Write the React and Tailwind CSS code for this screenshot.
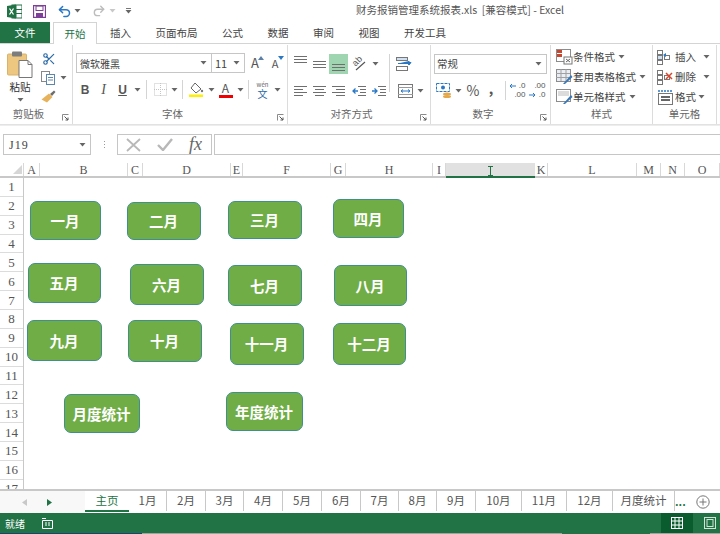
import React from "react";
import { Undo2, Redo2, Scissors } from "lucide-react";

const FONT = { fontFamily: '"Noto Sans CJK SC", "Noto Sans", sans-serif' };
const HEAD = { fontFamily: '"Liberation Serif", "Noto Sans CJK SC", serif' };

const Caret = ({ c = "#666" }) => (
  <svg width="7" height="4" viewBox="0 0 7 4" className="shrink-0"><path d="M0.5 0 H6.5 L3.5 3.5Z" fill={c} /></svg>
);
const Slot = ({ w, children, className = "" }) => (
  <div className={`flex h-full shrink-0 items-center justify-center ${className}`} style={{ width: w }}>{children}</div>
);
const Sep = () => <div className="mx-[3px] h-[19px] w-px shrink-0 bg-[#d4d4d4]" />;
const Launcher = () => (
  <svg width="7" height="7" viewBox="0 0 7 7" className="absolute bottom-[3px] right-[3px]">
    <path d="M0.5 6.5V0.5H6.5" fill="none" stroke="#8a8a8a" />
    <path d="M2.5 2.5L6 6M6 3.5V6H3.5" fill="none" stroke="#555" />
  </svg>
);
const Group = ({ w, label, launcher, children }) => (
  <div className="relative flex h-full shrink-0 flex-col border-r border-[#dcdcdc]" style={{ width: w }}>
    <div className="min-h-0 flex-1">{children}</div>
    <div className={`h-[18px] text-center text-[10.5px] leading-[15px] text-[#666] ${launcher ? "pr-[15px]" : ""}`}>{label}</div>
    {launcher && <Launcher />}
  </div>
);

const Lines = ({ rows }) => (
  <svg width="13" height="12" viewBox="0 0 13 12">
    {rows.map(([x, y, w], i) => (
      <rect key={i} x={x} y={y} width={w} height="1" fill="#6f6f6f" />
    ))}
  </svg>
);
const L = [[0, 1, 13], [0, 4, 9], [0, 7, 13], [0, 10, 9]];
const C = [[0, 1, 13], [2, 4, 9], [0, 7, 13], [2, 10, 9]];
const R = [[0, 1, 13], [4, 4, 9], [0, 7, 13], [4, 10, 9]];
const Indent = ({ dir }) => (
  <svg width="14" height="12" viewBox="0 0 14 12">
    <path d="M6 1.5H14M8 4.5H14M8 7.5H14M6 10.5H14" stroke="#6f6f6f" />
    {dir === "l" ? <path d="M6 6H1M3.5 3.5L1 6L3.5 8.5" fill="none" stroke="#2a78c5" strokeWidth="1.3" /> : <path d="M0 6H5M2.5 3.5L5 6L2.5 8.5" fill="none" stroke="#2a78c5" strokeWidth="1.3" />}
  </svg>
);
const BigA = ({ up }) => (
  <div className="relative flex h-full w-[20px] items-center justify-center text-[#555]" style={{ fontSize: up ? 13 : 11 }}>
    A
    <svg width="6" height="4" viewBox="0 0 6 4" className="absolute right-[1px] top-[3px]">
      <path d={up ? "M0 4L3 0L6 4Z" : "M0 0L3 4L6 0Z"} fill={up ? "#5b7fa8" : "#2a78c5"} />
    </svg>
  </div>
);

const StyleIcon = ({ kind }) => (
  <svg width="17" height="16" viewBox="0 0 17 16" className="shrink-0">
    {kind === 0 && (<>
      <rect x="0.5" y="0.5" width="14" height="12" fill="#fff" stroke="#8c8c8c" />
      <rect x="1" y="1" width="5" height="3" fill="#c8452e" /><rect x="1" y="5" width="5" height="3" fill="#c8452e" />
      <rect x="8" y="8" width="8" height="7" fill="#fff" stroke="#777" />
      <path d="M10 10L14 13M14 10L10 13" stroke="#666" />
    </>)}
    {kind === 1 && (<>
      <rect x="0.5" y="0.5" width="14" height="12" fill="#e8eef4" stroke="#8c8c8c" />
      <path d="M0 4.5H14M0 8.5H14M5 0V12M10 0V12" stroke="#a0a0a0" />
      <path d="M7 15L15 6L16.5 8L9 15Z" fill="#3a78b5" />
    </>)}
    {kind === 2 && (<>
      <rect x="0.5" y="0.5" width="14" height="12" fill="#fff" stroke="#8c8c8c" />
      <rect x="2" y="2" width="11" height="5" fill="#dcdcdc" />
      <path d="M7 15L15 6L16.5 8L9 15Z" fill="#3a78b5" />
    </>)}
  </svg>
);
const CellIcon = ({ kind }) => (
  <svg width="17" height="15" viewBox="0 0 17 15" className="shrink-0">
    {kind !== 2 ? (<>
      <rect x="0.5" y="0.5" width="5" height="4" fill="#fff" stroke="#777" />
      <rect x="0.5" y="5.5" width="5" height="4" fill={kind === 0 ? "#cfe0f2" : "#fff"} stroke="#777" />
      <rect x="0.5" y="10.5" width="5" height="4" fill="#fff" stroke="#777" />
      <rect x="7.5" y="5.5" width="5" height="4" fill="#fff" stroke="#777" />
      {kind === 0 ? <path d="M9 3L6 5L9 7Z" fill="#2a78c5" /> : <path d="M9 3L15 9M15 3L9 9" stroke="#d9442c" strokeWidth="1.5" />}
    </>) : (<>
      <rect x="1.5" y="3.5" width="14" height="11" fill="#fff" stroke="#777" />
      <path d="M1 1H16" stroke="#2a78c5" strokeDasharray="2 1" strokeWidth="1.5" />
      <path d="M4 7H13M4 10H13" stroke="#666" strokeWidth="2" />
    </>)}
  </svg>
);

const Clipboard = () => (
  <Group w={73} label="剪贴板" launcher>
    <div className="flex h-full">
      <div className="flex w-[37px] shrink-0 flex-col items-center pl-[3px] pt-[6px]">
        <svg width="26" height="27" viewBox="0 0 26 27">
          <rect x="0.5" y="3" width="19" height="21" rx="1" fill="#edc77f" stroke="#d9b26b" />
          <rect x="5" y="0.5" width="10" height="5" rx="1" fill="#7d7d7d" />
          <path d="M12 9.5H21L25 13.5V26.5H12Z" fill="#fff" stroke="#777" />
          <path d="M21 9.5V13.5H25" fill="none" stroke="#777" />
        </svg>
        <div className="mt-[1px] text-[10.5px] leading-[15px] text-[#333]">粘贴</div>
        <div className="mt-[4px]"><Caret /></div>
      </div>
      <div className="flex flex-col items-start pl-[4px] pt-[4px]">
        <div className="flex h-[20px] items-center pl-[1px]"><Scissors size={14} color="#2a6aa5" /></div>
        <div className="flex h-[20px] items-center gap-[5px]">
          <svg width="14" height="14" viewBox="0 0 14 14">
            <rect x="0.5" y="0.5" width="8" height="10" fill="#fff" stroke="#888" />
            <rect x="5.5" y="3.5" width="8" height="10" fill="#fff" stroke="#5c86ad" />
            <path d="M7 6.5H12M7 9H12" stroke="#5c86ad" />
          </svg>
          <Caret />
        </div>
        <div className="flex h-[20px] items-center">
          <svg width="15" height="13" viewBox="0 0 15 13">
            <path d="M9 4L13 0.5L14.5 2L11 6Z" fill="#6d6d6d" />
            <path d="M8 3.5L11.5 7L6 12.5L0.5 9.5Z" fill="#e6b35c" />
          </svg>
        </div>
      </div>
    </div>
  </Group>
);

const Combo = ({ w, text, pad = "pl-[3px]", size = "text-[10.5px]" }) => (
  <div className={`flex h-[20px] shrink-0 items-center justify-between border border-[#c6c6c6] bg-white pr-[4px] text-[#444] ${size} ${pad}`} style={{ width: w }}>
    <span>{text}</span><Caret />
  </div>
);

const FontGroup = () => (
  <Group w={215} label="字体" launcher>
    <div className="flex h-[28px] items-end pl-[3px]">
      <Combo w={136} text="微软雅黑" size="text-[10px]" />
      <Combo w={34} text="11" pad="pl-[3px] -ml-px" size="text-[11px]" />
      <div className="flex h-[20px]"><BigA up /><BigA /></div>
    </div>
    <div className="mt-[7px] flex h-[19px] items-center pl-[3px] text-[12px] text-[#555]">
      <Slot w={18}><span className="font-bold" style={{ fontFamily: '"Liberation Sans", sans-serif' }}>B</span></Slot>
      <Slot w={19}><span className="italic" style={{ fontFamily: '"Liberation Serif", serif', fontSize: 14 }}>I</span></Slot>
      <Slot w={19}><span className="font-bold underline" style={{ fontFamily: '"Liberation Sans", sans-serif' }}>U</span></Slot>
      <Slot w={11}><Caret /></Slot>
      <Sep />
      <Slot w={20}>
        <svg width="13" height="13" viewBox="0 0 13 13"><rect x="0.5" y="0.5" width="12" height="12" fill="none" stroke="#c4c4c4" strokeDasharray="1 1" /><path d="M6.5 0V13M0 6.5H13" stroke="#c4c4c4" strokeDasharray="1 1" /></svg>
      </Slot>
      <Slot w={9}><Caret /></Slot>
      <Sep />
      <Slot w={20}>
        <svg width="15" height="15" viewBox="0 0 15 15"><path d="M6 1L12 7L7 11L2 6Z" fill="#fff" stroke="#666" /><circle cx="13" cy="9" r="1.2" fill="#777" /><rect x="0" y="12.5" width="14" height="2.5" fill="#ffef00" /></svg>
      </Slot>
      <Slot w={10}><Caret /></Slot>
      <Slot w={19}>
        <div className="flex flex-col items-center leading-none">
          <span className="text-[12px] leading-[12px] text-[#555]">A</span>
          <div className="mt-[1px] h-[3px] w-[14px] bg-[#ee0000]" />
        </div>
      </Slot>
      <Slot w={10}><Caret /></Slot>
      <Sep />
      <Slot w={21}>
        <div className="flex flex-col items-center leading-none">
          <span className="block text-[6px] leading-[8px] text-[#666]">wén</span>
          <span className="block text-[10px] leading-[10px] text-[#2a6aa5]">文</span>
        </div>
      </Slot>
      <Slot w={9}><Caret /></Slot>
    </div>
  </Group>
);

const AlignGroup = () => (
  <Group w={143} label="对齐方式" launcher>
    <div className="flex h-[29px] items-end pl-[3px]">
      <Slot w={19} className="!h-[20px] pb-[6px]"><Lines rows={[[0, 1, 13], [0, 4, 13], [0, 7, 13]]} /></Slot>
      <Slot w={19} className="!h-[20px]"><Lines rows={[[0, 3, 13], [0, 6, 13], [0, 9, 13]]} /></Slot>
      <Slot w={19} className="!h-[20px] bg-[#9fd5b0] pt-[6px]"><Lines rows={[[0, 3, 13], [0, 6, 13], [0, 9, 13]]} /></Slot>
      <Slot w={23} className="!h-[20px]">
        <div className="relative h-[14px] w-[15px]">
          <span className="absolute left-0 top-[-2px] -rotate-45 text-[9px] leading-[12px] text-[#555]" style={{ fontFamily: '"Liberation Sans", sans-serif' }}>ab</span>
          <svg width="15" height="14" viewBox="0 0 15 14" className="absolute left-0 top-0"><path d="M4 13L13 5" stroke="#555" strokeWidth="1.2" /></svg>
        </div>
      </Slot>
      <Slot w={9} className="!h-[20px]"><Caret /></Slot>
      <div className="ml-[9px] mr-[3px] h-[38px] w-px translate-y-[9px] self-start bg-[#d4d4d4]" />
      <Slot w={22} className="!h-[20px]">
        <svg width="16" height="14" viewBox="0 0 16 14"><rect x="0.5" y="0.5" width="11" height="3" fill="#cfe0f2" stroke="#777" /><rect x="0.5" y="9.5" width="11" height="4" fill="#fff" stroke="#777" /><path d="M2 6.5H13V4M13 8L15 5.5H11Z" stroke="#2a78c5" fill="#2a78c5" /></svg>
      </Slot>
    </div>
    <div className="mt-[7px] flex h-[19px] items-center pl-[3px]">
      <Slot w={19}><Lines rows={L} /></Slot>
      <Slot w={19}><Lines rows={C} /></Slot>
      <Slot w={19}><Lines rows={R} /></Slot>
      <Slot w={21}><Indent dir="l" /></Slot>
      <Slot w={19}><Indent dir="r" /></Slot>
      <Slot w={6} />
      <Slot w={22}>
        <svg width="15" height="14" viewBox="0 0 15 14"><rect x="0.5" y="0.5" width="14" height="13" fill="#fff" stroke="#777" /><path d="M0 3.5H15M0 10.5H15" stroke="#999" /><path d="M3 7H12M3 7L5 5.5M3 7L5 8.5M12 7L10 5.5M12 7L10 8.5" stroke="#2a78c5" /></svg>
      </Slot>
      <Slot w={9}><Caret /></Slot>
    </div>
  </Group>
);

const NumberGroup = () => (
  <Group w={120} label="数字" launcher>
    <div className="flex h-[29px] items-end pl-[3px]">
      <Combo w={113} text="常规" pad="pl-[2px] border-[#ababab]" />
    </div>
    <div className="mt-[7px] flex h-[19px] items-center pl-[3px] text-[#555]">
      <Slot w={20}>
        <svg width="16" height="15" viewBox="0 0 16 15"><rect x="0.5" y="0.5" width="13" height="8" fill="#fff" stroke="#2a78c5" strokeDasharray="3 1" /><circle cx="7" cy="4.5" r="2" fill="#2a78c5" /><ellipse cx="11" cy="11" rx="4" ry="1.6" fill="#e3a84a" /><ellipse cx="11" cy="13.5" rx="4" ry="1.5" fill="#e3a84a" /></svg>
      </Slot>
      <Slot w={8}><Caret /></Slot>
      <Slot w={22}><span className="text-[14px]">%</span></Slot>
      <Slot w={14}><span className="-mt-[4px] text-[14px] font-bold">,</span></Slot>
      <Slot w={7} />
      <div className="h-[19px] w-px shrink-0 bg-[#d4d4d4]" />
      <Slot w={22}>
        <div className="relative h-[17px] w-[17px] text-[8px] leading-[8px] text-[#555]" style={{ fontFamily: '"Liberation Sans", sans-serif' }}>
          <span className="absolute right-0 top-0">.0</span><span className="absolute bottom-0 right-0">.00</span>
          <svg width="7" height="6" viewBox="0 0 7 6" className="absolute left-0 top-[1px]"><path d="M7 3H1M3 1L1 3L3 5" fill="none" stroke="#2a78c5" /></svg>
        </div>
      </Slot>
      <Slot w={18}>
        <div className="relative h-[17px] w-[17px] text-[8px] leading-[8px] text-[#555]" style={{ fontFamily: '"Liberation Sans", sans-serif' }}>
          <span className="absolute right-0 top-0">.00</span><span className="absolute bottom-0 right-0">.0</span>
          <svg width="7" height="6" viewBox="0 0 7 6" className="absolute bottom-[1px] left-0"><path d="M0 3H6M4 1L6 3L4 5" fill="none" stroke="#2a78c5" /></svg>
        </div>
      </Slot>
    </div>
  </Group>
);

const StyleRow = ({ kind, text }) => (
  <div className="flex h-[20px] items-center whitespace-nowrap pl-[5px] text-[10.5px] text-[#444]">
    <StyleIcon kind={kind} />
    <span>{text}</span>
    <span className="ml-[3px]"><Caret /></span>
  </div>
);
const CellRow = ({ kind, text, gap }) => (
  <div className="flex h-[20px] items-center whitespace-nowrap pl-[4px] text-[10.5px] text-[#444]">
    <CellIcon kind={kind} />
    <span className="ml-[1px]">{text}</span>
    <span style={{ marginLeft: gap }}><Caret /></span>
  </div>
);

const Ribbon = () => (
  <div className="flex h-[81px] border-b border-[#e2e2e2] bg-white pt-[1px]">
    <Clipboard />
    <FontGroup />
    <AlignGroup />
    <NumberGroup />
    <Group w={102} label="样式">
      <div className="pt-[2px]">
        <StyleRow kind={0} text="条件格式" />
        <StyleRow kind={1} text="套用表格格式" />
        <StyleRow kind={2} text="单元格样式" />
      </div>
    </Group>
    <Group w={64} label="单元格">
      <div className="pt-[2px]">
        <CellRow kind={0} text="插入" gap={7} />
        <CellRow kind={1} text="删除" gap={7} />
        <CellRow kind={2} text="格式" gap={2} />
      </div>
    </Group>
  </div>
);

const Titlebar = () => (
  <div className="relative flex h-[22px] items-center">
    <svg width="15" height="15" viewBox="0 0 15 15" className="ml-[7px] shrink-0">
      <rect x="5" y="1" width="10" height="13" fill="#fff" stroke="#217346" />
      <path d="M9 1V14M5 5.5H15M5 9.5H15" stroke="#217346" />
      <path d="M0 2L9 0.5V14.5L0 13Z" fill="#217346" />
      <path d="M2.5 4.5L6.5 10.5M6.5 4.5L2.5 10.5" stroke="#fff" strokeWidth="1.3" />
    </svg>
    <svg width="13" height="13" viewBox="0 0 13 13" className="ml-[11px] shrink-0">
      <path d="M0.5 0.5H12.5V12.5H0.5Z" fill="none" stroke="#7d3f98" strokeWidth="1.3" />
      <rect x="3" y="1" width="7" height="4.5" fill="none" stroke="#7d3f98" /><rect x="3" y="8" width="7" height="4.5" fill="#7d3f98" />
    </svg>
    <Undo2 size={15} color="#2a78c5" strokeWidth={2.4} className="ml-[11px] shrink-0" />
    <span className="ml-[2px]"><Caret /></span>
    <Redo2 size={14} color="#bcbcbc" strokeWidth={2.4} className="ml-[11px] shrink-0" />
    <span className="ml-[3px]"><Caret c="#c8c8c8" /></span>
    <div className="ml-[9px] flex flex-col items-center gap-[1px]"><div className="h-px w-[5px] bg-[#777]" /><Caret /></div>
    <div className="absolute left-[356px] top-0 whitespace-pre text-[10.5px] leading-[20px] text-[#555]">财务报销管理系统报表.xls  [兼容模式] - Excel</div>
  </div>
);
const Tabbar = () => (
  <div className="flex h-[22px] whitespace-nowrap border-b border-[#d4d4d4] text-[10.5px] text-[#444]">
    <div className="flex h-[21px] w-[50px] items-center justify-center bg-[#217346] text-white">文件</div>
    <div className="z-10 ml-[3px] flex h-[22px] w-[44px] items-center justify-center border border-b-0 border-[#d4d4d4] bg-white text-[#217346]">开始</div>
    <div className="flex items-center gap-[24.5px] pl-[13px]">
      {["插入", "页面布局", "公式", "数据", "审阅", "视图", "开发工具"].map((t) => <span key={t}>{t}</span>)}
    </div>
  </div>
);

const FormulaBar = () => (
  <div className="flex h-[21px] items-stretch bg-white pl-[3px] pr-0">
    <div className="flex w-[88px] shrink-0 items-center justify-between border border-[#c6c6c6] pl-[5px] pr-[4px] text-[12px] tracking-[1px] text-[#444]" style={HEAD}>
      <span>J19</span><Caret />
    </div>
    <div className="flex w-[26px] shrink-0 flex-col items-center justify-center gap-[2px]">
      <div className="h-px w-px bg-[#999]" /><div className="h-px w-px bg-[#999]" /><div className="h-px w-px bg-[#999]" />
    </div>
    <div className="flex w-[95px] shrink-0 items-center border border-[#c6c6c6]">
      <Slot w={31}><svg width="15" height="14" viewBox="0 0 15 14"><path d="M1 1L14 13M14 1L1 13" stroke="#b8b8b8" strokeWidth="1.8" /></svg></Slot>
      <Slot w={31}><svg width="16" height="13" viewBox="0 0 16 13"><path d="M1 7L6 12L15 1" fill="none" stroke="#b8b8b8" strokeWidth="2.4" /></svg></Slot>
      <Slot w={31}><span className="italic text-[#666]" style={{ fontFamily: '"Liberation Serif", serif', fontSize: 18 }}>fx</span></Slot>
    </div>
    <div className="ml-[2px] flex-1 border border-r-0 border-[#c6c6c6]" />
  </div>
);

const COLS = [["A", 16], ["B", 88], ["C", 15], ["D", 88], ["E", 12], ["F", 88], ["G", 15], ["H", 87], ["I", 13], ["J", 89], ["K", 13], ["L", 89], ["M", 24], ["N", 24], ["O", 35]];
const ColHeader = () => (
  <div className="flex h-[15px] border-b-2 border-[#c8c8c8] bg-white text-[12px] leading-[14px] text-[#555]" style={HEAD}>
    <div className="relative w-[24px] shrink-0 border-r border-[#d8d8d8]">
      <div className="absolute bottom-[2px] right-[1px] h-0 w-0 border-b-[9px] border-l-[9px] border-b-[#d6d6d6] border-l-transparent" />
    </div>
    {COLS.map(([n, w]) =>
      n === "J" ? (
        <div key={n} className="-mb-[2px] flex h-[15px] shrink-0 justify-center border-b-2 border-[#217346] bg-[#e1e1e1] pt-[3px]" style={{ width: w }}>
          <span className="flex h-[10px] w-[5px] flex-col items-center justify-between"><span className="h-px w-[5px] bg-[#217346]" /><span className="w-px flex-1 bg-[#217346]" /><span className="h-px w-[5px] bg-[#217346]" /></span>
        </div>
      ) : (
        <div key={n} className="flex shrink-0 justify-center border-r border-[#d8d8d8]" style={{ width: w }}>{n}</div>
      )
    )}
  </div>
);

const BTNS = [
  ["一月", 30, 201, 71, 39], ["二月", 127, 202, 74, 38], ["三月", 228, 201, 74, 38], ["四月", 333, 199, 71, 39],
  ["五月", 28, 263, 73, 40], ["六月", 130, 264, 74, 41], ["七月", 228, 265, 74, 41], ["八月", 334, 265, 73, 41],
  ["九月", 27, 320, 75, 41], ["十月", 128, 320, 74, 42], ["十一月", 230, 323, 74, 42], ["十二月", 333, 323, 73, 42],
  ["月度统计", 64, 394, 76, 39], ["年度统计", 226, 392, 77, 39],
];
const Sheet = () => (
  <div className="relative flex h-[311px] overflow-hidden bg-white">
    <div className="w-[24px] shrink-0 border-r border-[#c8c8c8] text-[13px] text-[#555]" style={HEAD}>
      {Array.from({ length: 17 }, (_, i) => (
        <div key={i} className="flex h-[18.87px] items-center justify-center border-b border-[#dcdcdc] leading-none">{i + 1}</div>
      ))}
    </div>
    {BTNS.map(([t, x, y, w, h]) => (
      <div
        key={t}
        className="absolute flex items-center justify-center rounded-[7px] border border-[#3f8f8a] bg-[#70ad47] pr-[1px] text-[14.5px] font-bold text-white"
        style={{ left: x, top: y - 178, width: w, height: h }}
      >
        {t}
      </div>
    ))}
  </div>
);

const SHEETS = [["1月", 38], ["2月", 39], ["3月", 38], ["4月", 39], ["5月", 39], ["6月", 39], ["7月", 38], ["8月", 38], ["9月", 39], ["10月", 46], ["11月", 45], ["12月", 46], ["月度统计", 62]];
const SheetTabs = () => (
  <div className="flex h-[24px] border-t-2 border-[#c8c8c8] bg-white text-[11.5px] text-[#555]">
    <div className="flex w-[85px] shrink-0 items-center bg-[#f8f8f8] pl-[22px]">
      <svg width="5" height="7" viewBox="0 0 5 7"><path d="M5 0V7L0 3.5Z" fill="#c8c8c8" /></svg>
      <svg width="5" height="7" viewBox="0 0 5 7" className="ml-[20px]"><path d="M0 0V7L5 3.5Z" fill="#217346" /></svg>
    </div>
    <div className="flex h-[21px] w-[44px] shrink-0 items-center justify-center border-b-2 border-[#217346] bg-white text-[#217346]">主页</div>
    {SHEETS.map(([t, w]) => (
      <div key={t} className="flex h-[20px] shrink-0 items-center justify-center border-r border-[#c8c8c8] last:border-r-0 last:text-[11px]" style={{ width: w }}>{t}</div>
    ))}
    <div className="flex h-[20px] items-center text-[11px] font-bold leading-none text-[#217346]">...</div>
    <svg width="14" height="14" viewBox="0 0 14 14" className="ml-[10px] mt-[4px] shrink-0">
      <circle cx="7" cy="7" r="6.2" fill="none" stroke="#777" /><path d="M7 3.5V10.5M3.5 7H10.5" stroke="#777" />
    </svg>
  </div>
);
const StatusBar = () => (
  <div className="flex h-[21px] flex-col bg-[#217346] text-[10px] text-white">
    <div className="flex min-h-0 flex-1 items-center">
      <span className="ml-[5px]">就绪</span>
      <svg width="11" height="11" viewBox="0 0 11 11" className="ml-[17px]"><path d="M0.5 2.5H10.5V10.5H0.5Z" fill="none" stroke="#fff" /><path d="M3 5H5M6 5H8M3 7H5M6 7H8M0 0.5H4" stroke="#fff" /></svg>
      <div className="ml-auto flex h-full">
        <div className="flex w-[32px] items-center justify-center bg-[#0a5c2f]">
          <svg width="12" height="12" viewBox="0 0 12 12"><rect x="0.5" y="0.5" width="11" height="11" fill="none" stroke="#fff" /><path d="M4 0V12M8 0V12M0 4H12M0 8H12" stroke="#fff" /></svg>
        </div>
        <div className="flex w-[27px] items-center justify-start pl-[11px]">
          <svg width="12" height="12" viewBox="0 0 12 12"><rect x="0.5" y="0.5" width="11" height="11" fill="none" stroke="#cfe3d6" /><rect x="3" y="2.5" width="6" height="7" fill="none" stroke="#cfe3d6" /></svg>
        </div>
      </div>
    </div>
    <div className="flex h-px shrink-0">
      <div className="w-[142px] bg-[#14466f]" />
      <div className="w-[420px] bg-[#9aa79f]" />
      <div className="w-[88px] bg-[#217346]" />
      <div className="flex-1 bg-[#9aa79f]" />
    </div>
  </div>
);

export default function App() {
  return (
    <div className="h-[534px] w-[720px] overflow-hidden bg-white" style={FONT}>
      <Titlebar />
      <Tabbar />
      <Ribbon />
      <div className="h-[9px] border-t border-[#ededed] bg-white" />
      <FormulaBar />
      <div className="h-[8px] bg-white" />
      <ColHeader />
      <Sheet />
      <SheetTabs />
      <StatusBar />
    </div>
  );
}
